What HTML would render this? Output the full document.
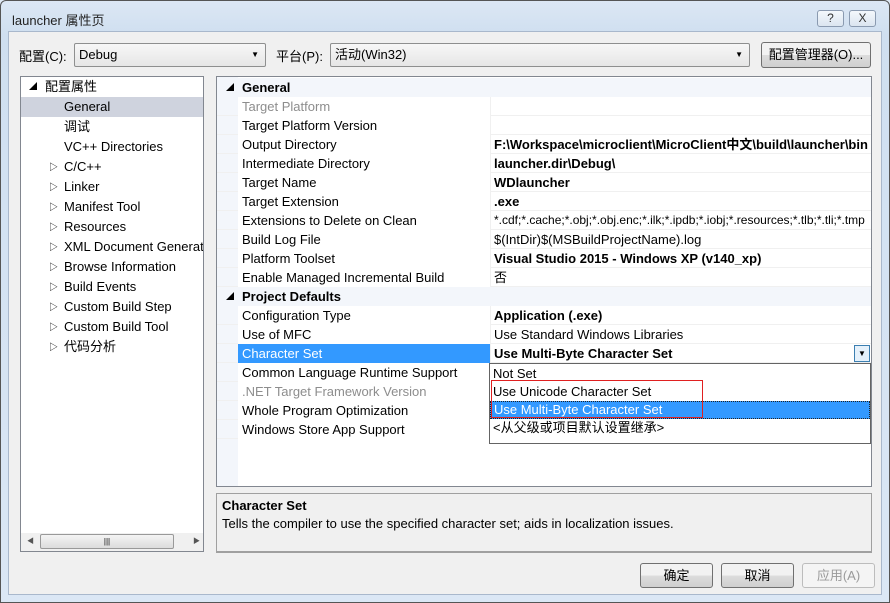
<!DOCTYPE html>
<html><head><meta charset="utf-8"><style>
*{box-sizing:border-box;margin:0;padding:0}
body{width:890px;height:603px;overflow:hidden;background:#dfe9f5;font-family:"Liberation Sans","Noto Sans CJK SC",sans-serif;font-size:13px;color:#000;position:relative}
.frame{position:absolute;left:0;top:0;width:890px;height:603px;border:1px solid #555;border-radius:6px 6px 0 0;background:linear-gradient(#dce7f4,#cfdff0 34px,#dbe7f5)}
.client{position:absolute;left:8px;top:31px;width:874px;height:564px;background:#f0f0f0;border:1px solid #a9b8cc}
.abs{position:absolute;white-space:nowrap}
.tb{position:absolute;top:10px;width:27px;height:17px;border:1px solid #8a9ab0;border-radius:3px;background:linear-gradient(#f4f8fc,#dbe5f0);text-align:center;font-size:12px;line-height:15px;color:#333}
.combo{position:absolute;height:24px;border:1px solid #8e8f8f;border-radius:2px;background:linear-gradient(#f7f7f7,#e6e6e6);padding-left:4px;line-height:22px}
.combo .ar{position:absolute;right:6px;top:0;font-size:8px}
.btn{position:absolute;height:25px;border:1px solid #707070;border-radius:3px;background:linear-gradient(#f2f2f2 50%,#dddddd 50%,#cfcfcf);text-align:center;line-height:23px}
.tree{position:absolute;left:20px;top:76px;width:184px;height:476px;border:1px solid #828790;background:#fff;overflow:hidden}
.ti{position:absolute;height:20px;line-height:20px;left:0;width:182px;white-space:nowrap;overflow:hidden}
.grid{position:absolute;left:216px;top:76px;width:656px;height:411px;border:1px solid #828790;background:#fff;overflow:hidden}
.row{position:absolute;left:0;width:654px;height:19px;line-height:19px;border-bottom:1px solid #f0f0f0;white-space:nowrap}
.row .n{position:absolute;left:21px;width:253px;height:19px;padding-left:4px;border-right:1px solid #f0f0f0;background:#fff;overflow:hidden}
.row .v{position:absolute;left:274px;width:380px;height:19px;padding-left:3px;overflow:hidden}
.gut{position:absolute;left:0;top:0;width:21px;height:409px;background:#f3f6fb}
.hdr{background:#f3f6fb;font-weight:bold}
.hdr .t{position:absolute;left:25px}
.hdr .a{position:absolute;left:9px;font-size:8px;font-weight:normal}
b{font-weight:bold}
.gray{color:#8d8d8d}
.desc{position:absolute;left:216px;top:493px;width:656px;height:60px;border:1px solid #a0a0a0;border-bottom:2px solid #a0a0a0;background:#f0f0f0}
</style></head><body>
<div class="frame"></div>
<div class="abs" style="left:12px;top:10px;color:#222">launcher 属性页</div>
<div class="tb" style="left:817px">?</div>
<div class="tb" style="left:849px">X</div>
<div class="client"></div>
<div class="abs" style="left:19px;top:46px">配置(C):</div>
<div class="combo" style="left:74px;top:43px;width:192px">Debug<span class="ar">▼</span></div>
<div class="abs" style="left:276px;top:46px">平台(P):</div>
<div class="combo" style="left:330px;top:43px;width:420px">活动(Win32)<span class="ar">▼</span></div>
<div class="btn" style="left:761px;top:42px;width:110px;height:26px">配置管理器(O)...</div>

<div class="tree">
<div class="ti" style="top:0"><span style="position:absolute;left:8px;font-size:8px">◢</span><span style="position:absolute;left:24px">配置属性</span></div>
<div class="ti" style="top:20px;background:#cfd3de"><span style="position:absolute;left:43px">General</span></div>
<div class="ti" style="top:40px"><span style="position:absolute;left:43px">调试</span></div>
<div class="ti" style="top:60px"><span style="position:absolute;left:43px">VC++ Directories</span></div>
<div class="ti" style="top:80px"><span style="position:absolute;left:28px;font-size:9px">▷</span><span style="position:absolute;left:43px">C/C++</span></div>
<div class="ti" style="top:100px"><span style="position:absolute;left:28px;font-size:9px">▷</span><span style="position:absolute;left:43px">Linker</span></div>
<div class="ti" style="top:120px"><span style="position:absolute;left:28px;font-size:9px">▷</span><span style="position:absolute;left:43px">Manifest Tool</span></div>
<div class="ti" style="top:140px"><span style="position:absolute;left:28px;font-size:9px">▷</span><span style="position:absolute;left:43px">Resources</span></div>
<div class="ti" style="top:160px"><span style="position:absolute;left:28px;font-size:9px">▷</span><span style="position:absolute;left:43px">XML Document Generator</span></div>
<div class="ti" style="top:180px"><span style="position:absolute;left:28px;font-size:9px">▷</span><span style="position:absolute;left:43px">Browse Information</span></div>
<div class="ti" style="top:200px"><span style="position:absolute;left:28px;font-size:9px">▷</span><span style="position:absolute;left:43px">Build Events</span></div>
<div class="ti" style="top:220px"><span style="position:absolute;left:28px;font-size:9px">▷</span><span style="position:absolute;left:43px">Custom Build Step</span></div>
<div class="ti" style="top:240px"><span style="position:absolute;left:28px;font-size:9px">▷</span><span style="position:absolute;left:43px">Custom Build Tool</span></div>
<div class="ti" style="top:260px"><span style="position:absolute;left:28px;font-size:9px">▷</span><span style="position:absolute;left:43px">代码分析</span></div>
<div style="position:absolute;left:0;top:456px;width:182px;height:18px;background:#f0f0f0">
<span style="position:absolute;left:6px;top:3px;font-size:7px;color:#555">◀</span>
<div style="position:absolute;left:19px;top:1px;width:134px;height:15px;border:1px solid #999;border-radius:2px;background:linear-gradient(#f4f4f4,#dcdcdc);text-align:center;font-size:8px;line-height:13px">|||</div>
<span style="position:absolute;left:172px;top:3px;font-size:7px;color:#555">▶</span>
</div>
</div>

<div class="grid">
<div class="gut"></div>
<div class="row hdr" style="top:1px;border:none;height:19px;width:654px"><span class="a">◢</span><span class="t">General</span></div>
<div class="row" style="top:20px"><div class="n gray">Target Platform</div><div class="v"></div></div>
<div class="row" style="top:39px"><div class="n">Target Platform Version</div><div class="v"></div></div>
<div class="row" style="top:58px"><div class="n">Output Directory</div><div class="v"><b>F:\Workspace\microclient\MicroClient中文\build\launcher\bin</b></div></div>
<div class="row" style="top:77px"><div class="n">Intermediate Directory</div><div class="v"><b>launcher.dir\Debug\</b></div></div>
<div class="row" style="top:96px"><div class="n">Target Name</div><div class="v"><b>WDlauncher</b></div></div>
<div class="row" style="top:115px"><div class="n">Target Extension</div><div class="v"><b>.exe</b></div></div>
<div class="row" style="top:134px"><div class="n">Extensions to Delete on Clean</div><div class="v" style="font-size:12px">*.cdf;*.cache;*.obj;*.obj.enc;*.ilk;*.ipdb;*.iobj;*.resources;*.tlb;*.tli;*.tmp</div></div>
<div class="row" style="top:153px"><div class="n">Build Log File</div><div class="v">$(IntDir)$(MSBuildProjectName).log</div></div>
<div class="row" style="top:172px"><div class="n">Platform Toolset</div><div class="v"><b>Visual Studio 2015 - Windows XP (v140_xp)</b></div></div>
<div class="row" style="top:191px"><div class="n">Enable Managed Incremental Build</div><div class="v">否</div></div>
<div class="row hdr" style="top:210px;border:none"><span class="a">◢</span><span class="t">Project Defaults</span></div>
<div class="row" style="top:229px"><div class="n">Configuration Type</div><div class="v"><b>Application (.exe)</b></div></div>
<div class="row" style="top:248px"><div class="n">Use of MFC</div><div class="v">Use Standard Windows Libraries</div></div>
<div class="row" style="top:267px"><div class="n" style="background:#3399ff;color:#fff">Character Set</div><div class="v"><b>Use Multi-Byte Character Set</b></div>
<div style="position:absolute;left:637px;top:1px;width:16px;height:17px;border:1px solid #3c7fb1;background:#e5f1fb;font-size:8px;text-align:center;line-height:15px">▼</div></div>
<div class="row" style="top:286px"><div class="n">Common Language Runtime Support</div><div class="v"></div></div>
<div class="row" style="top:305px"><div class="n gray">.NET Target Framework Version</div><div class="v"></div></div>
<div class="row" style="top:324px"><div class="n">Whole Program Optimization</div><div class="v"></div></div>
<div class="row" style="top:343px"><div class="n">Windows Store App Support</div><div class="v"></div></div>
</div>

<div style="position:absolute;left:489px;top:363px;width:382px;height:81px;border:1px solid #646464;background:#fff">
<div class="abs" style="left:3px;top:1px;line-height:18px">Not Set</div>
<div class="abs" style="left:3px;top:19px;line-height:18px">Use Unicode Character Set</div>
<div style="position:absolute;left:0;top:37px;width:380px;height:18px;background:#3399ff;color:#fff;padding-left:3px;line-height:16px;border:1px dotted #222;white-space:nowrap">Use Multi-Byte Character Set</div>
<div class="abs" style="left:3px;top:55px;line-height:18px">&lt;从父级或项目默认设置继承&gt;</div>
</div>
<div style="position:absolute;left:491px;top:380px;width:212px;height:38px;border:1px solid #e02020"></div>

<div class="desc">
<div class="abs" style="left:5px;top:4px;font-weight:bold">Character Set</div>
<div class="abs" style="left:5px;top:22px">Tells the compiler to use the specified character set; aids in localization issues.</div>
</div>

<div class="btn" style="left:640px;top:563px;width:73px">确定</div>
<div class="btn" style="left:721px;top:563px;width:73px">取消</div>
<div class="btn" style="left:802px;top:563px;width:73px;border-color:#bcbcbc;background:#f4f4f4;color:#9a9a9a">应用(A)</div>
</body></html>
